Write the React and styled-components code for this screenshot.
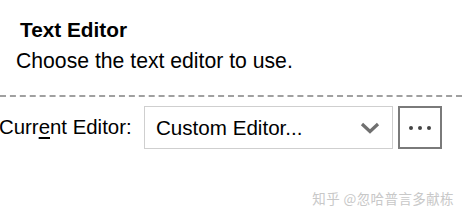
import React from "react";
import styled, { createGlobalStyle } from "styled-components";

const Global = createGlobalStyle`
  html, body { margin: 0; padding: 0; background: #ffffff; }
  body { font-family: "Liberation Sans", Arial, sans-serif; color: #000; }
`;

const Page = styled.div`
  width: 462px;
  height: 220px;
  position: relative;
  overflow: hidden;
  display: flex;
  flex-direction: column;
`;

const Header = styled.div`
  display: flex;
  flex-direction: column;
  padding: 18px 0 0 0;
  height: 77px;
  box-sizing: border-box;
`;

const Title = styled.div`
  font-weight: bold;
  font-size: 20.8px;
  line-height: 24px;
  padding-left: 20px;
`;

const Subtitle = styled.div`
  font-size: 21.2px;
  line-height: 24px;
  padding-left: 16px;
  margin-top: 7px;
`;

const Divider = styled.div`
  height: 0;
  border-top: 2px dashed #a0a0a0;
  margin-top: 18px;
`;

const Row = styled.div`
  display: flex;
  align-items: center;
  margin-top: 9px;
  height: 43px;
`;

const Label = styled.label`
  font-size: 20.4px;
  margin-left: -1px;
  width: 145px;
  white-space: nowrap;
  u { text-decoration: underline; text-underline-offset: 3px; }
`;

const Select = styled.div`
  box-sizing: border-box;
  width: 249px;
  height: 43px;
  border: 1px solid #cfcfcf;
  display: flex;
  align-items: center;
  justify-content: space-between;
  padding: 0 12px 0 11px;
  font-size: 20.6px;
`;

const MoreButton = styled.div`
  box-sizing: border-box;
  width: 44px;
  height: 43px;
  margin-left: 5px;
  border: 2px solid #7a7a7a;
  display: flex;
  align-items: center;
  justify-content: center;
  gap: 5px;
`;

const Dot = styled.span`
  width: 4px;
  height: 4px;
  background: #444;
  border-radius: 50%;
`;

const Watermark = styled.div`
  position: absolute;
  right: 8px;
  top: 188px;
  font-family: "Noto Sans CJK SC", sans-serif;
  font-size: 13.5px;
  color: #c8c8c8;
  letter-spacing: 0.4px;
`;

export default function App() {
  return (
    <Page>
      <Global />
      <Header>
        <Title>Text Editor</Title>
        <Subtitle>Choose the text editor to use.</Subtitle>
      </Header>
      <Divider />
      <Row>
        <Label>Curr<u>e</u>nt Editor:</Label>
        <Select>
          <span>Custom Editor...</span>
          <svg width="20" height="12" viewBox="0 0 20 12">
            <path d="M2 2 L10 9.5 L18 2" fill="none" stroke="#707070" strokeWidth="3.2" />
          </svg>
        </Select>
        <MoreButton>
          <Dot />
          <Dot />
          <Dot />
        </MoreButton>
      </Row>
      <Watermark>知乎 @忽哈普言多献栋</Watermark>
    </Page>
  );
}
